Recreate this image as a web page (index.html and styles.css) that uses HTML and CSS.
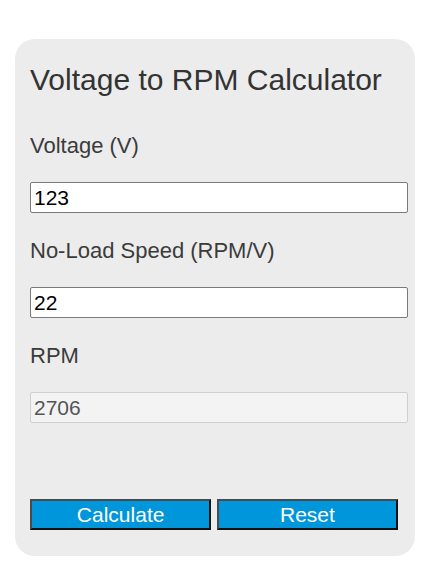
FILE: index.html
```html
<!DOCTYPE html>
<html lang="en">
<head>
    <meta charset="UTF-8">
    <meta name="viewport" content="width=device-width, initial-scale=1.0">
    <title>Voltage to RPM Calculator</title>
    <link rel="stylesheet" href="styles.css">
</head>
<body>
    <div class="calc">
        <h2 class="calc-title">Voltage to RPM Calculator</h2>

        <label class="calc-label" for="voltage">Voltage (V)</label>
        <input class="calc-input" type="text" id="voltage" value="123">

        <label class="calc-label" for="kv">No-Load Speed (RPM/V)</label>
        <input class="calc-input" type="text" id="kv" value="22">

        <label class="calc-label" for="rpm">RPM</label>
        <input class="calc-input calc-output" type="text" id="rpm" value="2706" readonly>

        <div class="calc-buttons">
            <button class="calc-btn" onclick="calculate()">Calculate</button>
            <button class="calc-btn" onclick="resetForm()">Reset</button>
        </div>
    </div>

    <script>
        // RPM = volts * kv
        function calculate() {
            const v = parseFloat(document.getElementById('voltage').value);
            const kv = parseFloat(document.getElementById('kv').value);
            if (isNaN(v) || isNaN(kv)) {
                document.getElementById('rpm').value = '';
                return;
            }
            document.getElementById('rpm').value = Math.round(v * kv * 100) / 100;
        }

        function resetForm() {
            document.getElementById('voltage').value = '';
            document.getElementById('kv').value = '';
            document.getElementById('rpm').value = '';
        }
    </script>
</body>
</html>
```

FILE: styles.css
```css
body {
    font-family: "Liberation Sans", Arial, sans-serif;
    margin: 0;
    padding: 39px 0 0 15px;
    background-color: #fff;
}
.calc {
    width: 400px;
    box-sizing: border-box;
    padding: 24px 15px 26px;
    background-color: #ececec;
    border-radius: 20px;
}
.calc-title {
    margin: 0;
    font-size: 30px;
    font-weight: normal;
    line-height: 34px;
    color: #333;
}
.calc-label {
    display: block;
    margin: 25px 0 24px;
    font-size: 22px;
    line-height: 25px;
    color: #3b3b3b;
}
.calc-title + .calc-label {
    margin-top: 36px;
}
.calc-input {
    display: block;
    width: 100%;
    box-sizing: content-box;
    height: 25px;
    margin: 0;
    padding: 2px 3px;
    border: 1px solid #7a7a7a;
    border-radius: 2px;
    background-color: #fff;
    font-family: "Liberation Sans", Arial, sans-serif;
    font-size: 21px;
    color: #000;
    outline: none;
}
.calc-output {
    background-color: #f3f3f3;
    border-color: #cfcfcf;
    color: #555;
}
.calc-buttons {
    display: flex;
    gap: 5.5px;
    margin-top: 76px;
}
.calc-btn {
    width: 49%;
    height: 31px;
    padding: 0;
    background-color: #0096dc;
    color: #fff;
    border: 2px solid;
    border-color: #4a4a4a #111 #111 #4a4a4a;
    font-family: "Liberation Sans", Arial, sans-serif;
    font-size: 21px;
    line-height: 25px;
    cursor: pointer;
}
.calc-btn:hover {
    background-color: #007bb5;
}
```
